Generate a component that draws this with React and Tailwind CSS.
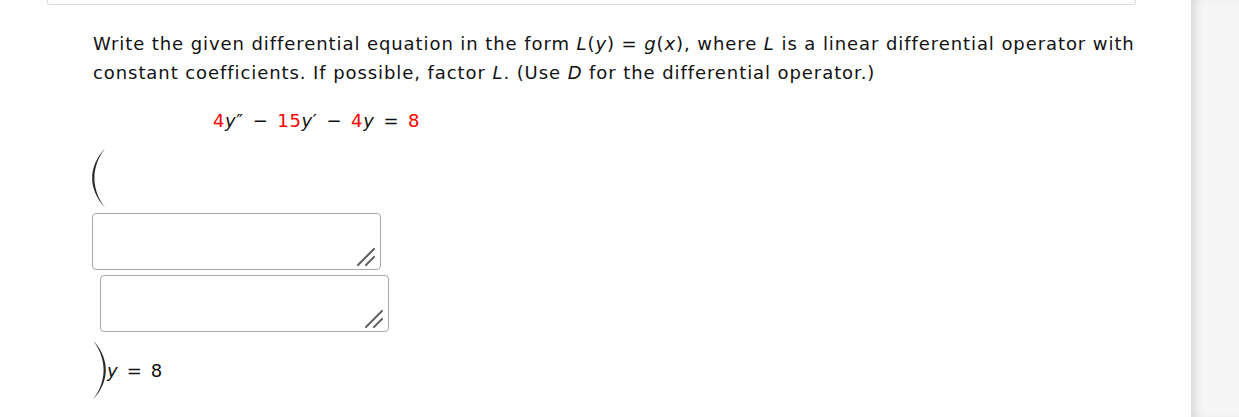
import React from "react";

function Paren({ flip }) {
  return (
    <svg width="14" height="60" viewBox="0 0 14 60" className="block">
      <g transform={flip ? "translate(14,0) scale(-1,1)" : undefined}>
        <path d="M13 0.5 C 3.5 10, 0 22, 0.2 30 C 0 38, 3.5 50, 13 59.5 C 4.8 49, 2.4 38, 2.4 30 C 2.4 22, 4.8 11, 13 0.5 Z" fill="#2a2a2a" />
      </g>
    </svg>
  );
}

function Handle() {
  return (
    <svg width="22" height="22" viewBox="0 0 22 22" className="pointer-events-none absolute bottom-[2px] right-[3px]">
      <line x1="2" y1="19" x2="18" y2="3" stroke="#666" strokeWidth="2.2" strokeLinecap="round" />
      <line x1="10" y1="19" x2="18" y2="11" stroke="#666" strokeWidth="2.2" strokeLinecap="round" />
    </svg>
  );
}

function Box({ className }) {
  return (
    <div className={"relative h-[57px] w-[289px] " + className}>
      <textarea className="block h-full w-full resize-none rounded-[4px] border border-[#a9a9a9] bg-white" />
      <Handle />
    </div>
  );
}

export default function App() {
  const font = { fontFamily: "Verdana, 'DejaVu Sans', sans-serif" };
  return (
    <div className="flex h-[417px] w-full overflow-hidden bg-white" style={font}>
      <div className="w-[1191px] shrink-0 bg-white">
        <div className="ml-[47px] h-[5px] w-[1089px] rounded-b-[3px] border border-t-0 border-[#dcdcdc]" />
        <div className="pl-[93px] pt-[24px] text-[18px] leading-[29px] tracking-[0.92px] text-[#111]">
          <p>
            Write the given differential equation in the form <i>L</i>(<i>y</i>) = <i>g</i>(<i>x</i>), where <i>L</i> is a linear differential operator with
          </p>
          <p>
            constant coefficients. If possible, factor <i>L</i>. (Use <i>D</i> for the differential operator.)
          </p>
        </div>
        <div className="mt-[19px] pl-[213px] text-[18px] leading-[29px] tracking-[0.6px] text-[#111] whitespace-nowrap">
          <span className="text-[#ff0000]">4</span><i>y</i>″<span className="mx-[9px] inline-block">−</span><span className="text-[#ff0000]">15</span><i>y</i>′<span className="mx-[9px] inline-block">−</span><span className="text-[#ff0000]">4</span><i>y</i><span className="mx-[9px] inline-block">=</span><span className="text-[#ff0000]">8</span>
        </div>
        <div className="mt-[13px] pl-[92px]">
          <Paren />
          <Box className="mt-[5px]" />
          <Box className="ml-[8px] mt-[5px]" />
          <div className="mt-[8px] flex items-center">
            <Paren flip />
            <span className="ml-[1px] text-[18px] text-[#111] whitespace-nowrap"><i>y</i><span className="mx-[9px] inline-block">=</span>8</span>
          </div>
        </div>
      </div>
      <div className="flex-1 bg-[#f5f5f5] shadow-[inset_8px_0_8px_-4px_rgba(0,0,0,0.12)]" />
    </div>
  );
}
